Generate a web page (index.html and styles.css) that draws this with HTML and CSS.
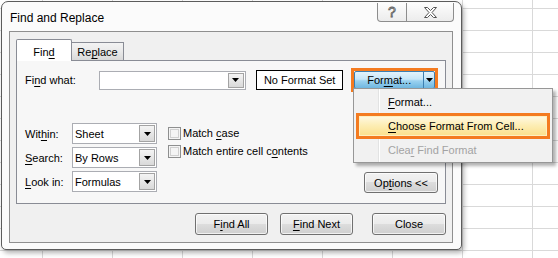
FILE: index.html
```html
<!DOCTYPE html>
<html lang="en">
<head>
    <meta charset="UTF-8">
    <title>Find and Replace</title>
    <link rel="stylesheet" href="styles.css">
</head>
<body>
    <div class="window">
        <div class="titlebar">
            <span class="title">Find and Replace</span>
            <div class="caps">
                <span class="cap help">?</span>
                <span class="cap close">
                    <svg width="13" height="11" viewBox="-0.5 -0.5 13 11"><path d="M0 0H3L6 3L9 0H12L7.5 5L12 10H9L6 7L3 10H0L4.5 5Z" fill="#fff" stroke="#555" stroke-width="1" stroke-linejoin="round"></path></svg>
                </span>
            </div>
        </div>
        <div class="client">
            <div class="tabs">
                <div class="tab active"><span>Fin<u>d</u></span></div>
                <div class="tab other"><span>Re<u>p</u>lace</span></div>
            </div>
            <div class="panel">
                <div class="find-row">
                    <span class="lbl-find">Fi<u>n</u>d what:</span>
                    <div class="combo wide">
                        <span class="val"></span>
                        <span class="arrow"><svg width="7" height="4" viewBox="0 0 7 4"><path d="M0 0H7L3.5 4Z" fill="#000"></path></svg></span>
                    </div>
                    <div class="noformat">No Format Set</div>
                    <div class="format-hl">
                        <div class="split-btn">
                            <span class="split-main"><span>For<u>m</u>at...</span></span>
                            <span class="split-arrow"><svg width="7" height="4" viewBox="0 0 7 4"><path d="M0 0H7L3.5 4Z" fill="#000"></path></svg></span>
                        </div>
                    </div>
                </div>
                <div class="opts">
                    <div class="opt-left">
                        <div class="opt-row">
                            <span class="lbl">Wit<u>h</u>in:</span>
                            <div class="combo sel">
                                <span class="val">Sheet</span>
                                <span class="arrow"><svg width="7" height="4" viewBox="0 0 7 4"><path d="M0 0H7L3.5 4Z" fill="#000"></path></svg></span>
                            </div>
                        </div>
                        <div class="opt-row">
                            <span class="lbl"><u>S</u>earch:</span>
                            <div class="combo sel">
                                <span class="val">By Rows</span>
                                <span class="arrow"><svg width="7" height="4" viewBox="0 0 7 4"><path d="M0 0H7L3.5 4Z" fill="#000"></path></svg></span>
                            </div>
                        </div>
                        <div class="opt-row">
                            <span class="lbl"><u>L</u>ook in:</span>
                            <div class="combo sel">
                                <span class="val">Formulas</span>
                                <span class="arrow"><svg width="7" height="4" viewBox="0 0 7 4"><path d="M0 0H7L3.5 4Z" fill="#000"></path></svg></span>
                            </div>
                        </div>
                    </div>
                    <div class="checks">
                        <div class="check"><span class="box"></span><span>Match <u>c</u>ase</span></div>
                        <div class="check"><span class="box"></span><span>Match entire cell c<u>o</u>ntents</span></div>
                    </div>
                    <button type="button" class="btn options"><span>Op<u>t</u>ions &lt;&lt;</span></button>
                </div>
            </div>
            <div class="actions">
                <button type="button" class="btn"><span>F<u>i</u>nd All</span></button>
                <button type="button" class="btn next"><span><u>F</u>ind Next</span></button>
                <button type="button" class="btn close-btn">Close</button>
            </div>
        </div>
    </div>

    <div class="menu">
        <div class="item"><span><u>F</u>ormat...</span></div>
        <div class="item picked"><span><u>C</u>hoose Format From Cell...</span></div>
        <div class="item disabled"><span>Clea<u>r</u> Find Format</span></div>
    </div>
</body>
</html>
```

FILE: styles.css
```css
* {
    box-sizing: border-box;
}
html, body {
    margin: 0;
    padding: 0;
}
body {
    position: relative;
    width: 558px;
    height: 258px;
    overflow: hidden;
    font-family: "Liberation Sans", Arial, sans-serif;
    font-size: 11px;
    color: #000;
    background-color: #fff;
    background-image:
        linear-gradient(to right, #d9d9d9 1px, transparent 1px),
        linear-gradient(to bottom, #d9d9d9 1px, transparent 1px);
    background-size: 70px 100%, 100% 22px;
    background-position: 42px 0, 0 8px;
}
u {
    text-decoration-thickness: 1px;
    text-underline-offset: 2px;
}

/* window frame */
.window {
    position: absolute;
    left: 1px;
    top: 1px;
    width: 461px;
    height: 249px;
    border: 1px solid #5c5c5c;
    border-radius: 7px 7px 5px 5px;
    background: #fbfbfb;
    box-shadow: 2px 3px 5px rgba(0, 0, 0, 0.3);
}
.titlebar {
    height: 29px;
    display: flex;
    justify-content: space-between;
    align-items: flex-start;
    padding: 0 7px 0 8px;
}
.title {
    font-size: 12px;
    line-height: 12px;
    margin-top: 10px;
}
.caps {
    display: flex;
    height: 19px;
    margin-top: 1px;
    border: 1px solid #8d8d8d;
    border-top: none;
    border-radius: 0 0 4px 4px;
    background: linear-gradient(#fdfdfd, #ececec);
}
.cap {
    display: flex;
    align-items: center;
    justify-content: center;
    width: 28px;
}
.cap.help {
    font-size: 14px;
    color: #fff;
    -webkit-text-stroke: 0.8px #555;
}
.cap.close {
    width: 47px;
    border-left: 1px solid #8d8d8d;
}

/* client area */
.client {
    width: 444px;
    height: 212px;
    margin-left: 7px;
    border: 1px solid #8f8f8f;
    background: #f0f0f0;
    padding: 7px 6px 7px 6px;
    display: flex;
    flex-direction: column;
}
.tabs {
    display: flex;
    align-items: flex-end;
    height: 21px;
    position: relative;
    z-index: 1;
}
.tab {
    display: flex;
    align-items: center;
    justify-content: center;
    border: 1px solid #898c95;
    border-bottom: none;
}
.tab.active {
    width: 56px;
    height: 22px;
    margin-bottom: -1px;
    padding-top: 2px;
    background: #fff;
    border-radius: 2px 2px 0 0;
}
.tab.other {
    width: 53px;
    height: 18px;
    margin-left: -1px;
    padding-top: 1px;
    background: linear-gradient(#f3f3f3, #e9e9e9 50%, #d9d9d9);
}
.panel {
    width: 430px;
    height: 144px;
    border: 1px solid #898c95;
    background: #f7f7f7;
    padding: 7px 7px 9px 8px;
}
.find-row {
    display: flex;
    align-items: center;
    height: 24px;
}
.lbl-find {
    width: 74px;
}
.combo {
    display: flex;
    border: 1px solid #abadb3;
    background: #fff;
}
.combo.wide {
    width: 148px;
    height: 19px;
}
.combo .val {
    flex: 1;
    padding-left: 2px;
    display: flex;
    align-items: center;
}
.combo .arrow {
    width: 16px;
    margin: 1px;
    border: 1px solid #a3a3a3;
    background: linear-gradient(#f4f4f4, #d9d9d9);
    display: flex;
    align-items: center;
    justify-content: center;
}
.noformat {
    width: 88px;
    height: 20px;
    margin-left: 10px;
    border: 1px solid #000;
    background: #fff;
    display: flex;
    align-items: center;
    justify-content: center;
}
.format-hl {
    width: 87px;
    height: 24px;
    margin-left: 8px;
    border: 3px solid #f47b20;
}
.split-btn {
    display: flex;
    height: 100%;
    border: 1px solid #3c7fb1;
    border-radius: 2px;
    background: linear-gradient(#e3f3fc, #c6e6f8 45%, #9bd2f0 55%, #6fb7e0);
}
.split-main {
    flex: 1;
    display: flex;
    align-items: center;
    justify-content: center;
    border-right: 1px solid #3c7fb1;
}
.split-arrow {
    width: 10px;
    display: flex;
    align-items: center;
    justify-content: center;
}

/* options */
.opts {
    display: flex;
    align-items: flex-start;
    margin-top: 31px;
}
.opt-left {
    display: flex;
    flex-direction: column;
    gap: 3px;
}
.opt-row {
    display: flex;
    align-items: center;
    height: 21px;
}
.lbl {
    width: 47px;
}
.combo.sel {
    width: 85px;
    height: 21px;
}
.checks {
    margin-left: 11px;
    margin-top: 1px;
}
.check {
    display: flex;
    align-items: center;
    height: 18px;
}
.box {
    width: 13px;
    height: 13px;
    margin-right: 2px;
    border: 1px solid #8e8f8f;
    background: #f4f4f4;
    box-shadow: inset 0 0 0 1px #f4f4f4, inset 0 0 0 2px #d0d0d0;
}
.btn {
    display: flex;
    align-items: center;
    justify-content: center;
    padding: 0;
    font-family: inherit;
    font-size: 11px;
    color: #000;
    border: 1px solid #707070;
    border-radius: 3px;
    background: linear-gradient(#f2f2f2, #ebebeb 50%, #dddddd 50%, #cfcfcf);
    box-shadow: inset 0 0 0 1px rgba(255, 255, 255, 0.7);
}
.btn.options {
    width: 74px;
    height: 21px;
    margin-left: auto;
    margin-top: 49px;
}
.actions {
    display: flex;
    justify-content: flex-end;
    margin-top: 9px;
}
.actions .btn {
    width: 73px;
    height: 22px;
}
.actions .next {
    margin-left: 12px;
}
.actions .close-btn {
    width: 74px;
    margin-left: 19px;
}

/* dropdown menu of the Format button */
.menu {
    position: absolute;
    left: 353px;
    top: 88px;
    width: 200px;
    height: 75px;
    padding: 2px 1px 1px 2px;
    border: 1px solid #979797;
    background-color: #f1f1f1;
    background-image: linear-gradient(to right, transparent 24px, #e2e3e3 24px, #e2e3e3 25px, #fff 25px, #fff 26px, transparent 26px);
    box-shadow: 3px 3px 3px rgba(0, 0, 0, 0.3);
}
.item {
    height: 22px;
    display: flex;
    align-items: center;
    padding-left: 32px;
}
.item.picked {
    height: 26px;
    margin-right: 1px;
    padding-left: 29px;
    border: 3px solid #f47b20;
    background: linear-gradient(#fff9e4, #fdeeb6 45%, #fbe08a);
    box-shadow: inset 0 0 0 1px #fdf0c0;
}
.item.disabled {
    color: #a3a3a3;
}
```
